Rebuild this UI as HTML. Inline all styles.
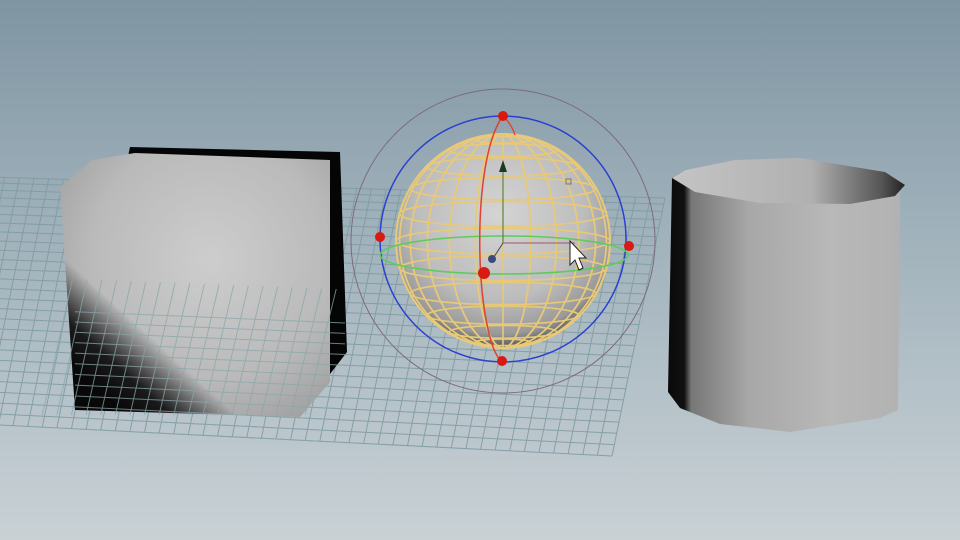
<!DOCTYPE html>
<html><head><meta charset="utf-8"><style>
html,body{margin:0;padding:0;width:960px;height:540px;overflow:hidden}
svg{display:block}
</style></head><body>
<svg id="s" width="960" height="540" viewBox="0 0 960 540" xmlns="http://www.w3.org/2000/svg">
<defs>
<linearGradient id="bg" x1="0" y1="0" x2="0" y2="1">
<stop offset="0" stop-color="#7f95a2"/><stop offset="0.4" stop-color="#9eb0ba"/><stop offset="1" stop-color="#c9d1d5"/>
</linearGradient>
<radialGradient id="cubeg" cx="210" cy="260" r="200" gradientUnits="userSpaceOnUse">
<stop offset="0" stop-color="#cdcdcd"/><stop offset="0.6" stop-color="#bababa"/><stop offset="1" stop-color="#9a9a9a"/>
</radialGradient>
<linearGradient id="cubedark" x1="110" y1="400" x2="160" y2="345" gradientUnits="userSpaceOnUse">
<stop offset="0" stop-color="#000" stop-opacity="0.95"/><stop offset="0.4" stop-color="#000" stop-opacity="0.85"/><stop offset="1" stop-color="#000" stop-opacity="0"/>
</linearGradient>
<linearGradient id="cyl" x1="668" y1="0" x2="900" y2="0" gradientUnits="userSpaceOnUse">
<stop offset="0" stop-color="#0a0a0a"/><stop offset="0.07" stop-color="#111"/><stop offset="0.1" stop-color="#777"/><stop offset="0.35" stop-color="#a8a8a8"/><stop offset="0.7" stop-color="#b8b8b8"/><stop offset="1" stop-color="#b2b2b2"/>
</linearGradient>
<linearGradient id="cyltop" x1="672" y1="0" x2="905" y2="0" gradientUnits="userSpaceOnUse">
<stop offset="0" stop-color="#c4c4c4"/><stop offset="0.6" stop-color="#b0b0b0"/><stop offset="0.9" stop-color="#555"/><stop offset="1" stop-color="#222"/>
</linearGradient>
<radialGradient id="sph" cx="500" cy="215" r="140" gradientUnits="userSpaceOnUse">
<stop offset="0" stop-color="#d4d4d4"/><stop offset="0.6" stop-color="#bdbdbd"/><stop offset="0.85" stop-color="#9a9a9a"/><stop offset="1" stop-color="#333"/>
</radialGradient>
<clipPath id="sc"><circle cx="503" cy="241" r="107"/></clipPath>
</defs>
<rect width="960" height="540" fill="url(#bg)"/>
<g id="grid" stroke="#7f9ca2" stroke-width="1" fill="none" opacity="0.9"></g>
<polygon points="130,147 340,152 347,352 310,400 75,410" fill="#050505"/>
<polygon points="60,187 92,160 135,153 330,160 330,382 300,417 75,410" fill="url(#cubeg)"/>
<polygon points="60,187 92,160 135,153 330,160 330,382 300,417 75,410" fill="url(#cubedark)"/>
<g id="grid2" stroke="#8aa6ab" stroke-width="1" fill="none" opacity="0.75"></g>
<circle cx="503" cy="241" r="107" fill="url(#sph)"/>
<g clip-path="url(#sc)" stroke="#e8c978" stroke-width="1.6" fill="none" id="wire"></g>
<circle cx="503" cy="241" r="107" fill="none" stroke="#e8c978" stroke-width="2"/>
<circle cx="503" cy="241" r="152" fill="none" stroke="#7d6a80" stroke-width="1"/>
<circle cx="503" cy="239" r="123" fill="none" stroke="#2b3fd0" stroke-width="1.5"/>
<ellipse cx="504" cy="255" rx="124" ry="19" fill="none" stroke="#5ccc5c" stroke-width="1.6"/>
<path d="M503,116 C470,160 475,330 500,360" fill="none" stroke="#e04030" stroke-width="1.5"/>
<path d="M503,116 Q512,125 515,135" fill="none" stroke="#e04030" stroke-width="1.3"/>
<line x1="503" y1="170" x2="503" y2="243" stroke="#3a7a4a" stroke-width="1"/>
<polygon points="503,160 499,172 507,172" fill="#1c3a26"/>
<line x1="503" y1="243" x2="575" y2="243" stroke="#9a5a60" stroke-width="1"/>
<line x1="503" y1="243" x2="492" y2="260" stroke="#445" stroke-width="1"/>
<circle cx="492" cy="259" r="4" fill="#3a4a7a"/>
<rect x="566" y="179" width="5" height="5" fill="none" stroke="#777" stroke-width="1"/>
<g fill="#d81a10">
<circle cx="503" cy="116" r="5"/><circle cx="380" cy="237" r="5"/><circle cx="629" cy="246" r="5"/><circle cx="484" cy="273" r="6"/><circle cx="502" cy="361" r="5"/>
</g>
<path d="M570,241 L570,265 L575,260 L579,270 L583,268 L579,258 L586,258 Z" fill="#fff" stroke="#222" stroke-width="1"/>
<polygon points="672,178 685,170 735,160 800,158 885,172 900,185 898,410 880,418 790,432 720,424 680,408 668,392" fill="url(#cyl)"/>
<polygon points="672,178 685,170 735,160 800,158 885,172 905,185 895,196 850,204 760,203 695,192" fill="url(#cyltop)"/>
<script>
(function(){
var NS="http://www.w3.org/2000/svg";
function P(u,v){var TL=[-10,177],TR=[665,198],BR=[612,456],BL=[-60,422];
var tx=TL[0]+(TR[0]-TL[0])*u,ty=TL[1]+(TR[1]-TL[1])*u,bx=BL[0]+(BR[0]-BL[0])*u,by=BL[1]+(BR[1]-BL[1])*u;
var w=Math.pow(v,1.15);return [tx+(bx-tx)*w,ty+(by-ty)*w];}
function add(g,a,b){var l=document.createElementNS(NS,"line");l.setAttribute("x1",a[0]);l.setAttribute("y1",a[1]);l.setAttribute("x2",b[0]);l.setAttribute("y2",b[1]);g.appendChild(l);}
var g=document.getElementById("grid"),rows=26,cols=46,i;
for(i=0;i<=rows;i++){add(g,P(0,i/rows),P(1,i/rows));}
for(i=0;i<=cols;i++){add(g,P(i/cols,0),P(i/cols,1));}
var g2=document.getElementById("grid2");
for(i=0;i<=rows;i++){var a=P(0,i/rows),b=P(1,i/rows);if(a[1]>300){var t1=(75-a[0])/(b[0]-a[0]),t2=(345-a[0])/(b[0]-a[0]);add(g2,[75,a[1]+(b[1]-a[1])*t1],[345,a[1]+(b[1]-a[1])*t2]);}}
for(i=0;i<=cols;i++){var a=P(i/cols,0),b=P(i/cols,1);var c=P(i/cols,0.45);if(c[0]>70&&c[0]<345)add(g2,c,[b[0],Math.min(b[1],415)]);}
var w=document.getElementById("wire"),cx=503,cy=241,r=107;
for(i=1;i<12;i++){var lat=-Math.PI/2+i*Math.PI/12;var yy=cy+r*Math.sin(lat)*0.98,rx=r*Math.cos(lat);var e=document.createElementNS(NS,"ellipse");e.setAttribute("cx",cx);e.setAttribute("cy",yy);e.setAttribute("rx",rx);e.setAttribute("ry",rx*0.12);w.appendChild(e);}
for(i=1;i<12;i++){var lon=i*Math.PI/12;var rx=Math.abs(r*Math.cos(lon));var e=document.createElementNS(NS,"ellipse");e.setAttribute("cx",cx);e.setAttribute("cy",cy);e.setAttribute("rx",rx);e.setAttribute("ry",r);w.appendChild(e);}
})();
</script>
</svg>
</body></html>
